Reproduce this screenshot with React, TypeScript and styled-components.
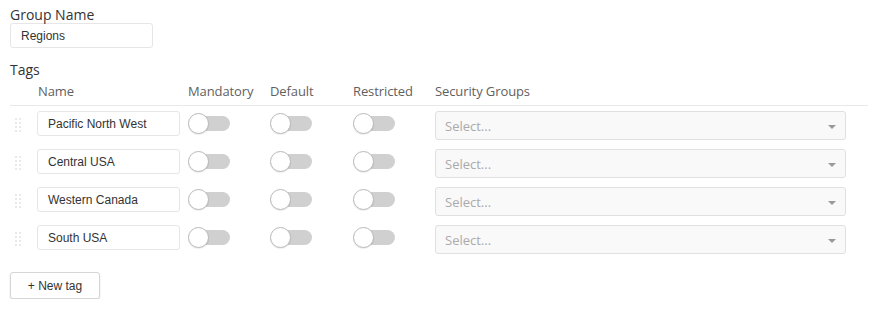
import React from "react";
import styled, { createGlobalStyle } from "styled-components";

const GlobalStyle = createGlobalStyle`
  html, body { margin: 0; padding: 0; background: #fff; }
  body { font-family: "Open Sans", "Liberation Sans", sans-serif; }
  * { box-sizing: border-box; }
`;

const Page = styled.div`
  padding: 7px 15px 0 10px;
  width: 883px;
`;

const Label = styled.div<{ $top?: number }>`
  font-family: "Open Sans", sans-serif;
  font-size: 14px;
  line-height: 16px;
  color: #333;
  margin-top: ${(p) => p.$top ?? 0}px;
`;

const TextInput = styled.div<{ $width: number }>`
  width: ${(p) => p.$width}px;
  height: 25px;
  border: 1px solid #e6e6e6;
  border-radius: 3px;
  background: #fff;
  padding-left: 10px;
  display: flex;
  align-items: center;
  font-family: "Liberation Sans", Arial, sans-serif;
  font-size: 12px;
  color: #333;
`;

const Grid = styled.div`
  display: grid;
  grid-template-columns: 27px 151px 82px 83px 82px 411px 1fr;
  align-items: start;
`;

const HeaderRow = styled(Grid)`
  margin-top: 5px;
  padding-bottom: 6px;
  border-bottom: 1px solid #e8e8e8;
`;

const HeaderCell = styled.div<{ $indent?: number }>`
  font-family: "Open Sans", sans-serif;
  font-size: 13px;
  line-height: 16px;
  color: #5f5f5f;
  letter-spacing: -0.1px;
  padding-left: ${(p) => p.$indent ?? 0}px;
`;

const TagRow = styled(Grid)`
  height: 38px;
  padding-top: 5px;
`;

const Handle = styled.div`
  margin: 7px 0 0 5px;
  display: grid;
  grid-template-columns: 2px 2px;
  grid-auto-rows: 2px;
  gap: 2px;
  & > span {
    background: #e2e2e2;
    border-radius: 1px;
  }
`;

const ToggleWrap = styled.div`
  position: relative;
  width: 42px;
  height: 21px;
  margin-top: 2px;
`;

const Track = styled.div`
  position: absolute;
  left: 7px;
  right: 0;
  top: 3px;
  height: 15px;
  border-radius: 8px;
  background: #d0d0d0;
`;

const Knob = styled.div`
  position: absolute;
  left: 0;
  top: 0;
  width: 21px;
  height: 21px;
  border-radius: 50%;
  background: #fff;
  border: 1px solid #b9b9b9;
  box-shadow: 0 1px 1px rgba(0, 0, 0, 0.08);
`;

const SelectBox = styled.div`
  height: 29px;
  border: 1px solid #e0e0e0;
  border-radius: 3px;
  background: #f9f9f9;
  display: flex;
  align-items: center;
  justify-content: space-between;
  padding: 0 9px 0 9px;
  font-family: "Open Sans", sans-serif;
  font-size: 13px;
  color: #aaa;
`;

const Caret = styled.span`
  width: 0;
  height: 0;
  border-left: 4px solid transparent;
  border-right: 4px solid transparent;
  border-top: 4px solid #999;
  margin-top: 2px;
`;

const Button = styled.button`
  margin-top: 14px;
  width: 90px;
  height: 27px;
  border: 1px solid #d6d6d6;
  border-radius: 3px;
  background: #fff;
  box-shadow: 0 1px 2px rgba(0, 0, 0, 0.12);
  font-family: "Liberation Sans", Arial, sans-serif;
  font-size: 12px;
  color: #333;
  padding: 0;
  cursor: pointer;
`;

const Toggle = () => (
  <ToggleWrap>
    <Track />
    <Knob />
  </ToggleWrap>
);

const tags = ["Pacific North West", "Central USA", "Western Canada", "South USA"];

export default function App() {
  return (
    <>
      <GlobalStyle />
      <Page>
        <Label>Group Name</Label>
        <TextInput $width={143}>Regions</TextInput>
        <Label $top={14}>Tags</Label>
        <HeaderRow>
          <span />
          <HeaderCell $indent={1}>Name</HeaderCell>
          <HeaderCell>Mandatory</HeaderCell>
          <HeaderCell>Default</HeaderCell>
          <HeaderCell>Restricted</HeaderCell>
          <HeaderCell>Security Groups</HeaderCell>
          <span />
        </HeaderRow>
        {tags.map((t) => (
          <TagRow key={t}>
            <Handle>
              {Array.from({ length: 8 }).map((_, i) => (
                <span key={i} />
              ))}
            </Handle>
            <TextInput $width={143}>{t}</TextInput>
            <Toggle />
            <Toggle />
            <Toggle />
            <SelectBox>
              <span>Select...</span>
              <Caret />
            </SelectBox>
            <span />
          </TagRow>
        ))}
        <Button>+ New tag</Button>
      </Page>
    </>
  );
}
